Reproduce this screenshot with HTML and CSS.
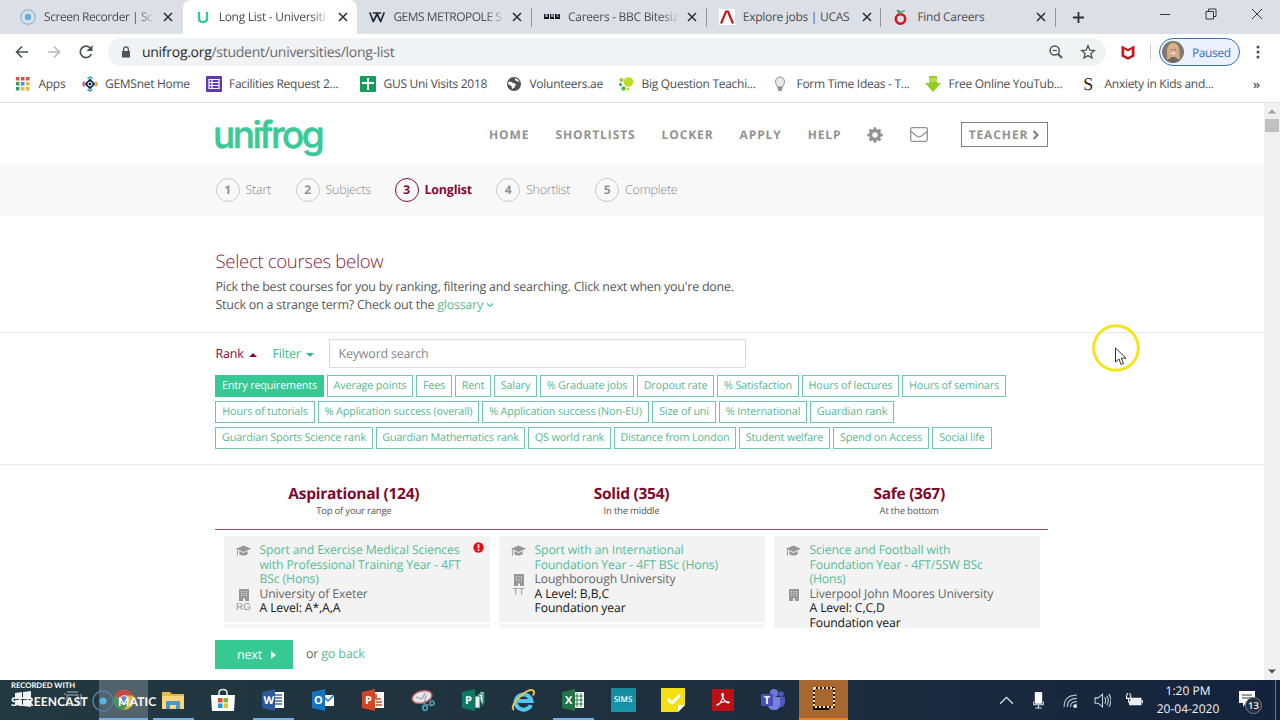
FILE: index.html
```html
<!DOCTYPE html>
<html lang="en">
<head>
<meta charset="utf-8">
<title>Long List - Universities</title>
<link rel="stylesheet" href="styles.css">
</head>
<body>
<div class="screen">
  <header class="browser">
    <div class="tabstrip">
      <div class="tab"><svg class="fav" viewBox="0 0 16 16"><circle cx="8" cy="8" r="7.2" fill="none" stroke="#78b6d8" stroke-width="1.1"/><circle cx="8" cy="8" r="3.2" fill="#5fb0dc"/></svg><span class="tab-title t1">Screen Recorder | Sc</span><svg class="close" viewBox="0 0 10 10"><path d="M1 1l8 8M9 1L1 9"/></svg></div>
      <div class="tab active"><svg class="fav" viewBox="0 0 16 16"><path d="M4 3v6.500q0 3.500 4 3.500t4-3.500V3" fill="none" stroke="#36c694" stroke-width="2.300"/></svg><span class="tab-title t2">Long List - Universiti</span><svg class="close" viewBox="0 0 10 10"><path d="M1 1l8 8M9 1L1 9"/></svg></div>
      <div class="tab sep"><svg class="fav" viewBox="0 0 16 16"><path d="M1 4L4.300 12.500 8 5 11.700 12.500 15 4M4.500 4H8L9.500 7.500M8 4h3.500" fill="none" stroke="#222831" stroke-width="1.700" stroke-linejoin="round" stroke-linecap="round"/></svg><span class="tab-title t3">GEMS METROPOLE S</span><svg class="close" viewBox="0 0 10 10"><path d="M1 1l8 8M9 1L1 9"/></svg></div>
      <div class="tab sep"><span class="fav bbc"><b>B</b><b>B</b><b>C</b></span><span class="tab-title t4">Careers - BBC Bitesiz</span><svg class="close" viewBox="0 0 10 10"><path d="M1 1l8 8M9 1L1 9"/></svg></div>
      <div class="tab sep"><svg class="fav" viewBox="0 0 16 16"><path d="M0 0h16v16H0z" fill="#fff"/><path d="M2 14.500L7 2.500h2l5 12" fill="none" stroke="#c5161c" stroke-width="2.200"/></svg><span class="tab-title t5">Explore jobs | UCAS</span><svg class="close" viewBox="0 0 10 10"><path d="M1 1l8 8M9 1L1 9"/></svg></div>
      <div class="tab sep"><svg class="fav" viewBox="0 0 16 16"><ellipse cx="7.500" cy="10" rx="4.700" ry="4.700" fill="none" stroke="#db111c" stroke-width="2.500"/><path d="M4 1q4 0 4 3.500Q4 4.500 4 1zM8 4.500q0-3 4-3" fill="#5a9d6c" stroke="#5a9d6c"/></svg><span class="tab-title t6">Find Careers</span><svg class="close" viewBox="0 0 10 10"><path d="M1 1l8 8M9 1L1 9"/></svg></div>
      <svg class="newtab" viewBox="0 0 14 14"><path d="M7 1v12M1 7h12" stroke="#2f3237" stroke-width="2"/></svg>
      <div class="window-buttons">
        <svg viewBox="0 0 12 12"><path d="M1 6.500h10"/></svg>
        <svg viewBox="0 0 12 12"><path d="M1 3.500h7.500V11H1zM3.500 3.500V1H11v7.500H8.500"/></svg>
        <svg viewBox="0 0 12 12"><path d="M1 1l10 10M11 1L1 11"/></svg>
      </div>
    </div>
    <div class="toolbar">
      <svg class="tool" viewBox="0 0 16 16"><path d="M14 8H2.500M8 2.500L2.500 8 8 13.500" fill="none" stroke="#4d5156" stroke-width="1.600"/></svg>
      <svg class="tool" viewBox="0 0 16 16"><path d="M2 8h11.500M8 2.500L13.500 8 8 13.500" fill="none" stroke="#b5b7ba" stroke-width="1.500"/></svg>
      <svg class="tool" viewBox="0 0 16 16"><path d="M13.300 10A5.700 5.700 0 1 1 12.500 4.400" fill="none" stroke="#4d5156" stroke-width="1.700"/><path d="M14.500 1v6h-6z" fill="#4d5156"/></svg>
      <div class="omnibox">
        <svg class="lock" viewBox="0 0 10 12"><path d="M1 5h8v6.500H1z" fill="#505256"/><path d="M2.700 5V3.200a2.300 2.300 0 0 1 4.600 0V5" fill="none" stroke="#505256" stroke-width="1.300"/></svg>
        <span class="url"><b>unifrog.org</b>/student/universities/long-list</span>
        <svg class="omni-icon" viewBox="0 0 16 16"><circle cx="6.700" cy="6.500" r="4.600" fill="none" stroke="#505256" stroke-width="1.500"/><path d="M10 10l4 4" stroke="#505256" stroke-width="1.900"/><path d="M4.500 6.500h4.400" stroke="#505256" stroke-width="1.200"/></svg>
        <svg class="omni-icon star" viewBox="0 0 16 16"><path d="M8 1.800l1.800 4.300 4.600.4-3.500 3 1.100 4.500-4-2.400L4 14l1.100-4.500-3.500-3 4.600-.4z" fill="none" stroke="#505256" stroke-width="1.300"/></svg>
      </div>
      <svg class="shield" viewBox="0 0 14 15"><path d="M.5.500L7 4 13.500.500v11L7 14.700.500 11.500z" fill="#c01820"/><path d="M3.200 4.300L7 6.500l3.800-2.200V10L7 12 3.200 10z" fill="#fff"/></svg>
      <span class="divider"></span>
      <div class="profile"><svg viewBox="0 0 22 22"><circle cx="11" cy="11" r="11" fill="#817970"/><path d="M5.500 19Q3 2 11 2t6.500 17z" fill="#d0ac80"/><ellipse cx="11.300" cy="9.800" rx="3.700" ry="5.200" fill="#dfa98d"/><path d="M7.500 9q.500-4 4-5.500Q14.500 5 15.300 9V5l-4-2.500-4 2.500z" fill="#dfc294"/><path d="M9.500 12q1.800 1.800 3.600 0z" stroke="#fff" stroke-width=".6" fill="#fff"/><path d="M9 8.700h1.500M12.300 8.700h1.500" stroke="#58392f" stroke-width=".8"/><path d="M5 19.500l5-3.500h3l5 3.500-6.500 2.500z" fill="#77665f"/></svg><span>Paused</span></div>
      <svg class="dots" viewBox="0 0 4 16"><circle cx="2" cy="3" r="1.500"/><circle cx="2" cy="8" r="1.500"/><circle cx="2" cy="13" r="1.500"/></svg>
    </div>
    <nav class="bookmarks">
      <a><svg viewBox="0 0 16 16"><path d="M1 1h3.500v3.500H1zM6 1h3.500v3.500H6zM11 1h3.500v3.500H11z" fill="#db5145"/><path d="M1 6h3.500v3.500H1z" fill="#38a05d"/><path d="M6 6h3.500v3.500H6z" fill="#4a8bda"/><path d="M11 6h3.500v3.500H11zM6 11h3.500v3.500H6zM11 11h3.500v3.500H11z" fill="#e5b745"/><path d="M1 11h3.500v3.500H1z" fill="#38a05d"/></svg><span>Apps</span></a>
      <a><svg viewBox="0 0 16 16"><path d="M8 2.500L13.500 8 8 13.500 2.500 8z" fill="#16304c"/><circle cx="8" cy="8" r="2" fill="none" stroke="#fff"/><path d="M5.500 2.500L8 1l2.500 1.500" fill="none" stroke="#2daad0" stroke-width="1.500"/><path d="M2.500 5.500L1 8l1.500 2.500" fill="none" stroke="#e04280" stroke-width="1.500"/><path d="M13.500 5.500L15 8l-1.500 2.500" fill="none" stroke="#df9f38" stroke-width="1.500"/><path d="M5.500 13.500L8 15l2.500-1.500" fill="none" stroke="#3797bc" stroke-width="1.500"/></svg><span>GEMSnet Home</span></a>
      <a><svg viewBox="0 0 16 16"><rect width="16" height="16" rx="1" fill="#6536b2"/><path d="M3 3.500h10v9H3zM6 3.500v9M3 6.500h10M3 9.500h10" fill="none" stroke="#fff" stroke-width="1.200"/></svg><span>Facilities Request 2...</span></a>
      <a><svg viewBox="0 0 16 16"><rect width="16" height="16" rx="1" fill="#159d59"/><path d="M8 2v12M2 7h12" stroke="#fff" stroke-width="2"/></svg><span>GUS Uni Visits 2018</span></a>
      <a><svg viewBox="0 0 16 16"><circle cx="8" cy="8" r="7" fill="#505256"/><path d="M2 6q3-1 5 1l3 1-1.500 3.500L6 13l-.5-3-3-1.500zM8.500 2l1 2.500 4 1.500-1.500-2.500z" fill="#fff"/></svg><span>Volunteers.ae</span></a>
      <a><svg viewBox="0 0 16 16"><circle cx="10.500" cy="6" r="4.800" fill="#bfd928"/><circle cx="3.500" cy="4" r="2" fill="#9ac94c"/><circle cx="2.500" cy="8.500" r="1.600" fill="#35a957"/><circle cx="5.500" cy="12.500" r="2.200" fill="#57b84f"/><circle cx="10" cy="13" r="1.600" fill="#bfd928"/></svg><span>Big Question Teachi...</span></a>
      <a><svg viewBox="0 0 16 16"><path d="M4.500 11Q2.500 8 2.500 5.500a4.500 4.500 0 0 1 9 0Q11.500 8 9.500 11z" fill="#e8e8e3" stroke="#929690"/><path d="M4.500 12h5M5 14h4" stroke="#777" stroke-width="1.300"/></svg><span>Form Time Ideas - T...</span></a>
      <a><svg viewBox="0 0 16 16"><path d="M4 0h8v7h4l-8 9-8-9h4z" fill="#91ce20"/><path d="M4 3h8M4 5h8" stroke="#d5ef8c"/></svg><span>Free Online YouTub...</span></a>
      <a><i>S</i><span>Anxiety in Kids and...</span></a>
      <a class="more">»</a>
    </nav>
  </header>

  <div class="viewport">
    <main class="page">
      <header class="site-header wrap">
        <div class="logo">unifrog</div>
        <nav class="menu">
          <a>HOME</a><a>SHORTLISTS</a><a>LOCKER</a><a>APPLY</a><a>HELP</a>
          <svg class="gear" viewBox="0 0 16 16"><path fill-rule="evenodd" d="M6.800.300h2.400l.4 2 1.300.5 1.700-1.100 1.700 1.700-1.100 1.700.5 1.300 2 .4v2.400l-2 .4-.5 1.300 1.100 1.700-1.700 1.700-1.700-1.100-1.300.5-.4 2H6.800l-.4-2-1.300-.5-1.700 1.100-1.700-1.700 1.100-1.700-.5-1.300-2-.4V6.800l2-.4.500-1.300-1.100-1.700 1.700-1.700 1.700 1.100 1.300-.5zM8 5.300a2.700 2.700 0 1 0 0 5.400 2.700 2.700 0 0 0 0-5.400z" fill="#929292"/></svg>
          <svg class="mail" viewBox="0 0 18 15"><rect x=".7" y=".7" width="16.600" height="13.600" rx="1.500"/><path d="M1 4.500l6 4.800q2 1.400 4 0l6-4.800"/></svg>
          <a class="teacher">TEACHER<svg viewBox="0 0 8 10"><path d="M1.500 1l4 4-4 4" fill="none" stroke="#868686" stroke-width="2.300"/></svg></a>
        </nav>
      </header>
      <section class="steps-band">
        <div class="steps wrap">
          <div class="step"><b>1</b><span class="s1">Start</span></div>
          <div class="step"><b>2</b><span>Subjects</span></div>
          <div class="step current"><b>3</b><span>Longlist</span></div>
          <div class="step"><b>4</b><span>Shortlist</span></div>
          <div class="step"><b>5</b><span>Complete</span></div>
        </div>
      </section>
      <section class="intro wrap">
        <h1>Select courses below</h1>
        <p>Pick the best courses for you by ranking, filtering and searching. Click next when you're done.</p>
        <p>Stuck on a strange term? Check out the <a>glossary <svg viewBox="0 0 8 6"><path d="M1 1.500l3 3 3-3" fill="none" stroke="#55bd95" stroke-width="1.200"/></svg></a></p>
      </section>
      <section class="filters">
        <div class="wrap">
          <div class="search-row">
            <a class="rank">Rank <svg viewBox="0 0 8 4"><path d="M0 4l4-4 4 4z" fill="#850b36"/></svg></a>
            <a class="filter">Filter <svg viewBox="0 0 8 4"><path d="M0 0l4 4 4-4z" fill="#32bd8c"/></svg></a>
            <div class="search">Keyword search</div>
          </div>
          <div class="tags row-one"><a class="on">Entry requirements</a><a>Average points</a><a>Fees</a><a>Rent</a><a>Salary</a><a>% Graduate jobs</a><a>Dropout rate</a><a>% Satisfaction</a><a>Hours of lectures</a><a>Hours of seminars</a></div>
          <div class="tags row-two"><a>Hours of tutorials</a><a>% Application success (overall)</a><a>% Application success (Non-EU)</a><a>Size of uni</a><a>% International</a><a>Guardian rank</a></div>
          <div class="tags row-three"><a>Guardian Sports Science rank</a><a>Guardian Mathematics rank</a><a>QS world rank</a><a>Distance from London</a><a>Student welfare</a><a>Spend on Access</a><a>Social life</a></div>
        </div>
      </section>
      <section class="results wrap">
        <div class="bands">
          <div><h2>Aspirational (124)</h2><p>Top of your range</p></div>
          <div><h2>Solid (354)</h2><p>In the middle</p></div>
          <div><h2>Safe (367)</h2><p>At the bottom</p></div>
        </div>
        <div class="cards">
          <div class="col">
            <article class="card">
              <svg class="cap" viewBox="0 0 16 12"><path d="M8 0l8 3.500L8 7 0 3.500z"/><path d="M3.500 6L8 8l4.500-2v3.500q-4.500 2.500-9 0zM1 4v7h1V4z"/></svg>
              <a>Sport and Exercise Medical Sciences<br>with Professional Training Year - 4FT<br>BSc (Hons)</a>
              <div class="kind"><svg class="bld" viewBox="0 0 10 12"><path d="M0 0h10v12H0z"/><path d="M2.500 2v6M5 2v6M7.500 2v6" stroke="#e5e5e5" stroke-dasharray="1 1"/><path d="M4 12V9.500h2V12" fill="#f3f3f4"/></svg>RG</div>
              <div class="info">University of Exeter<br><em>A Level: A*,A,A</em></div>
              <svg class="alert" viewBox="0 0 12 12"><circle cx="6" cy="6" r="5.600" fill="#ec0b14"/><path d="M6 2.500v4.300M6 8v1.700" stroke="#fff" stroke-width="1.800"/></svg>
            </article>
            <div class="next-card"></div>
          </div>
          <div class="col">
            <article class="card">
              <svg class="cap" viewBox="0 0 16 12"><path d="M8 0l8 3.500L8 7 0 3.500z"/><path d="M3.500 6L8 8l4.500-2v3.500q-4.500 2.500-9 0zM1 4v7h1V4z"/></svg>
              <a>Sport with an International<br>Foundation Year - 4FT BSc (Hons)</a>
              <div class="kind"><svg class="bld" viewBox="0 0 10 12"><path d="M0 0h10v12H0z"/><path d="M2.500 2v6M5 2v6M7.500 2v6" stroke="#e5e5e5" stroke-dasharray="1 1"/><path d="M4 12V9.500h2V12" fill="#f3f3f4"/></svg>TT</div>
              <div class="info">Loughborough University<br><em>A Level: B,B,C<br>Foundation year</em></div>
            </article>
            <div class="next-card"></div>
          </div>
          <div class="col">
            <article class="card tall">
              <svg class="cap" viewBox="0 0 16 12"><path d="M8 0l8 3.500L8 7 0 3.500z"/><path d="M3.500 6L8 8l4.500-2v3.500q-4.500 2.500-9 0zM1 4v7h1V4z"/></svg>
              <a>Science and Football with<br>Foundation Year - 4FT/5SW BSc<br>(Hons)</a>
              <div class="kind"><svg class="bld" viewBox="0 0 10 12"><path d="M0 0h10v12H0z"/><path d="M2.500 2v6M5 2v6M7.500 2v6" stroke="#e5e5e5" stroke-dasharray="1 1"/><path d="M4 12V9.500h2V12" fill="#f3f3f4"/></svg></div>
              <div class="info">Liverpool John Moores University<br><em>A Level: C,C,D<br>Foundation year</em></div>
            </article>
          </div>
        </div>
      </section>
      <footer class="actions wrap"><a class="next">next<svg viewBox="0 0 5 8"><path d="M0 0l5 4-5 4z" fill="#fff"/></svg></a><span>or <a>go back</a></span></footer>
    </main>
    <aside class="scrollbar"><svg viewBox="0 0 8 5"><path d="M0 4.500L4 .500l4 4z" fill="#9a9a9a"/></svg><span class="thumb"></span><svg class="down" viewBox="0 0 8 5"><path d="M0 .500L4 4.500l4-4z" fill="#505050"/></svg></aside>
  </div>

  <footer class="taskbar">
    <div class="apps">
      <div><svg viewBox="0 0 24 24"><path d="M4 5l7-1v7H4zM12 4l8-1v8h-8zM4 12h7v6l-7-1zM12 12h8v7l-8-1z" fill="#edf1f2"/></svg></div>
      <div><svg viewBox="0 0 24 24"><path d="M6 7h11v10H6zM4 5v2M20 6v12M6 4h11" fill="none" stroke="#a9b5ba"/></svg></div>
      <div class="open chrome"><svg viewBox="0 0 24 24"><circle cx="12" cy="12" r="10" fill="#e4b33b"/><path d="M3.300 7A10 10 0 0 1 21 7.500H12L8 14z" fill="#c94840"/><path d="M3.300 7A10 10 0 0 0 12 22l4-7-8-1z" fill="#459758"/><circle cx="12" cy="12" r="4.700" fill="#eee"/><circle cx="12" cy="12" r="3.700" fill="#4d8ac8"/></svg></div>
      <div class="open"><svg viewBox="0 0 24 24"><path d="M1 4h8l2 2h12v15H1z" fill="#e8b848"/><path d="M1 8h22v13H1z" fill="#fad778"/><path d="M5 21v-7q0-1 1-1h12q1 0 1 1v7h-4v-4H9v4z" fill="#4a98d1"/></svg></div>
      <div><svg viewBox="0 0 24 24"><path d="M8 9V5q0-3.500 4-3.500T16 5v4" fill="none" stroke="#dce8e9" stroke-width="1.600"/><path d="M0 7h24l-1 16H1z" fill="#fff"/><path d="M7 10h4.500v4.500H7z" fill="#dc5133"/><path d="M12.500 10H17v4.500h-4.500z" fill="#83b82c"/><path d="M7 15.500h4.500V20H7z" fill="#159fdb"/><path d="M12.500 15.500H17V20h-4.500z" fill="#f3ba25"/></svg></div>
      <div class="open"><svg viewBox="0 0 24 24"><path d="M11 4h12v16H11z" fill="#fff"/><path d="M13 7h8M13 10h8M13 13h8M13 16h8" stroke="#3d66ad" stroke-width="1.500"/><path d="M1 4l13-3v22L1 20z" fill="#2b579b"/><text x="2.500" y="16">W</text></svg></div>
      <div><svg viewBox="0 0 24 24"><path d="M12 7h11v11H12z" fill="#fff"/><path d="M12 8l5 5 6-6" fill="none" stroke="#1876be" stroke-width="1.500"/><path d="M1 4l13-3v22L1 20z" fill="#1775bd"/><text x="3" y="16">O</text></svg></div>
      <div><svg viewBox="0 0 24 24"><path d="M12 4h11v16H12z" fill="#fff"/><path d="M15 6v5h5M15 14h6M15 17h6" stroke="#cf4727" stroke-width="1.700" fill="none"/><path d="M1 4l13-3v22L1 20z" fill="#cf4727"/><text x="4" y="16">P</text></svg></div>
      <div><svg viewBox="0 0 24 24"><ellipse cx="11" cy="9" rx="10" ry="6" transform="rotate(-15 11 9)" fill="#e3e7e7" stroke="#bc6264" stroke-width="1.500"/><path d="M5 9l6 2 3-6M15 7l-3 14M14 16l7 2" stroke="#879ba4" fill="none"/><circle cx="14" cy="20" r="2.300" fill="none" stroke="#3da0bd" stroke-width="1.700"/><circle cx="21" cy="15" r="2" fill="none" stroke="#3da0bd" stroke-width="1.700"/></svg></div>
      <div><svg viewBox="0 0 24 24"><path d="M14 8h5v12h-5zM17 6h5v12M19 4h4v12" fill="#ebf6f0" stroke="#19775d"/><path d="M1 4l13-3v22L1 20z" fill="#107765"/><text x="4" y="16">P</text></svg></div>
      <div><svg viewBox="0 0 24 24"><path d="M20 17a8 7.500 0 1 1 .5-4H7" fill="none" stroke="#53c5ee" stroke-width="4"/><path d="M3 22Q-1 19 8 9.500 18 0 22 2.500q2 1 0 5" fill="none" stroke="#eac24b" stroke-width="2"/></svg></div>
      <div class="open"><svg viewBox="0 0 24 24"><path d="M12 4h11v16H12z" fill="#fff"/><path d="M16 5v14M20 5v14M13 8h9M13 12h9M13 16h9" stroke="#26774a"/><path d="M1 4l13-3v22L1 20z" fill="#227446"/><text x="4" y="16">X</text></svg></div>
      <div><span class="sims">SIMS</span></div>
      <div><svg viewBox="0 0 24 24"><path d="M0 0h24v17l-7 7H0z" fill="#f4df13"/><path d="M17 24v-7h7z" fill="#fff"/><path d="M7 11l4 4 8-8" fill="none" stroke="#fff" stroke-width="3"/></svg></div>
      <div><svg viewBox="0 0 24 24"><path d="M1 1h22v22H1z" fill="#bd1014"/><path d="M6 17Q9 17 11.500 10q1.500-5 0-4.500-1.500 1 .8 4.800 2.700 4.700 5 4.700 2.500-1.500-2-1.500-5 0-9.300 3.500z" fill="none" stroke="#fff" stroke-width="1.200"/></svg></div>
      <div><svg viewBox="0 0 24 24"><circle cx="13" cy="5" r="4" fill="#7076d2"/><circle cx="20" cy="6" r="2.800" fill="#5158ba"/><path d="M16 9h8v6q-1 5-6 4z" fill="#5158ba"/><path d="M7 9h12v7q0 6-6 6t-6-6z" fill="#7981df"/><path d="M0 6h12v12H0z" fill="#464eb8"/><text x="2.800" y="16">T</text></svg></div>
      <div class="snip"><svg viewBox="0 0 24 24"><path d="M1 20h16v3H1z" fill="#100d09"/><path d="M2 1h20v19H2z" fill="none" stroke="#201b15" stroke-width="2"/><path d="M2 1h20v19H2z" fill="none" stroke="#f4dfb5" stroke-width="2" stroke-dasharray="2 2"/></svg></div>
    </div>
    <div class="tray">
      <svg viewBox="0 0 16 16"><path d="M2 11l6-6 6 6" fill="none" stroke="#dbe2eb" stroke-width="1.200"/></svg>
      <svg viewBox="0 0 16 16"><rect x="4.500" y="0" width="7" height="11" rx="1" fill="#fff"/><path d="M3.500 9v3h9V9M8 12v3M5 15h6" stroke="#dce3e9" fill="none"/></svg>
      <svg viewBox="0 0 16 16"><path d="M2 14Q2 3 14 3M5 14q0-8 9-8M8 14q0-5 6-5M11 14q0-2.500 3-2.500" fill="none" stroke="#aeb9c7" stroke-width="1.100"/><circle cx="12.500" cy="13.500" r="1.500" fill="#fff"/></svg>
      <svg viewBox="0 0 16 16"><path d="M1 5.500h3l4-3.500v12l-4-3.500H1zM10 5q2 3 0 6M12 3.500q3 4.500 0 9M14 2q4 6 0 12" fill="none" stroke="#cbd4df"/></svg>
      <svg viewBox="0 0 16 16"><path d="M4.500 6H14v6H3.500V9" fill="#e9eef4" stroke="#fff"/><path d="M15.300 7.500v3M.500 3v3h4V3M1.200 1v2M3.800 1v2M2.500 6v4" stroke="#fff" fill="none"/></svg>
      <div class="clock"><span>1:20 PM</span><span>20-04-2020</span></div>
      <div class="notice"><svg viewBox="0 0 18 18"><path d="M1 1h16v12H8l-3 4v-4H1z" fill="#fff"/><path d="M4 5h10M4 8h10" stroke="#25384b"/></svg><span>13</span></div>
      <span class="desktop-edge"></span>
    </div>
  </footer>

  <div class="watermark"><span class="recorded">RECORDED WITH</span><span class="brand"><span class="cast">SCREENCAST</span><svg viewBox="0 0 24 24"><circle cx="12" cy="12" r="10" fill="none" stroke="#5381a8" stroke-width="1.400"/><circle cx="12" cy="12" r="3.600" fill="#5bb2e9"/></svg><span class="matic">MATIC</span></span></div>
  <svg class="pointer" viewBox="0 0 50 50"><circle cx="25" cy="25" r="22.300" fill="none" stroke="#f2e51c" stroke-width="3"/><path d="M24.500 25v14l3.500-3 2 5.500 2.500-1-2.200-5.300h4.700z" fill="#fff" stroke="#333" stroke-width="1"/></svg>
</div>
</body>
</html>
```
FILE: styles.css
```css
* { box-sizing: border-box; }
body { margin: 0; font-family: "Open Sans", "Noto Sans", sans-serif; overflow: hidden; text-rendering: geometricPrecision; }
h1, h2, p { margin: 0; }
svg { display: block; flex: none; }
.screen { position: relative; width: 1280px; height: 720px; display: grid; grid-template-rows: 103px 577px 40px; background: #fff; overflow: hidden; }

.browser { border-bottom: 1px solid #e1e1e2; color: #4b4e53; }
.tabstrip { height: 34px; background: #dcdfe6; display: flex; align-items: center; padding-left: 8px; }
.tab { width: 174.700px; height: 34px; display: flex; align-items: center; padding: 0 0 1px 12px; font-size: 12px; letter-spacing: -0.280px; }
.tab.active { background: #fff; border-radius: 8px 8px 0 0; }
.tab.sep { background: linear-gradient(#92969d, #92969d) 100% 50% / 1px 19px no-repeat; }
.fav { width: 16px; height: 16px; flex: none; }
.tab-title { width: 110px; margin-left: 8px; white-space: nowrap; mask-image: linear-gradient(90deg, #000 84%, transparent 102%); }
.close { width: 10px; height: 10px; margin-left: 9px; stroke: #2e3136; stroke-width: 1.600; }
.t1 { letter-spacing: -0.450px; }
.t3 { letter-spacing: -0.500px; }
.bbc { display: flex; align-items: center; gap: 1px; }
.bbc b { width: 4.700px; height: 5px; background: #15181b; color: #ddd; font-size: 4px; line-height: 5px; text-align: center; letter-spacing: 0; }
.t5, .t6 { mask-image: none; }
.newtab { width: 13px; height: 13px; margin-left: 16px; }
.window-buttons { display: flex; gap: 34px; margin-left: auto; padding-right: 17px; align-self: flex-start; margin-top: 8px; }
.window-buttons svg { width: 12px; height: 12px; fill: none; stroke: #34383e; stroke-width: 1; }
.toolbar { height: 34px; display: flex; align-items: center; padding: 2px 0 0 14px; }
.tool { width: 16px; height: 16px; margin-right: 16px; }
.omnibox { width: 998px; height: 28px; border-radius: 14px; background: #f1f2f4; margin-left: -2px; display: flex; align-items: center; padding: 0 10px 0 13px; }
.lock { width: 10px; height: 12px; }
.url { flex: 1; margin-left: 11px; font-size: 14px; color: #686b70; letter-spacing: -0.280px; }
.url b { font-weight: 400; color: #27292d; }
.omni-icon { width: 16px; height: 16px; margin-left: 16px; }
.shield { width: 14px; height: 15px; margin-left: 15px; }
.divider { width: 1px; height: 16px; background: #cccdd0; margin: 0 8px 0 15px; }
.profile { width: 81px; height: 28px; border: 1px solid #3a70bd; border-radius: 14px; background: #ecf2fd; color: #3b70bc; display: flex; align-items: center; gap: 8px; padding-left: 2px; font-size: 12px; letter-spacing: -0.400px; }
.profile svg { width: 22px; height: 22px; }
.dots { width: 4px; height: 16px; fill: #494c50; margin-left: 16px; }
.bookmarks { height: 31px; padding-left: 15px; display: grid; grid-template-columns: 66.500px 124px 154.500px 146px 112px 155px 152px 156px 174px auto; align-items: center; font-size: 12px; letter-spacing: -0.280px; white-space: nowrap; }
.bookmarks a { display: flex; align-items: center; gap: 7.500px; }
.bookmarks svg, .bookmarks i { width: 16px; height: 16px; flex: none; }
.bookmarks i { font: 18px/16px "Liberation Serif", serif; text-align: center; color: #222; margin: 0 1px 0 -1px; }
.bookmarks .more { font-size: 13px; font-weight: 600; margin-left: -2px; }

.viewport { display: grid; grid-template-columns: 1264px 16px; min-height: 0; }
.page { overflow: hidden; }
.wrap { width: 833px; margin-left: 215px; }
.site-header { height: 61px; display: flex; align-items: center; justify-content: space-between; }
.logo { font: 500 37px/56px Inter, sans-serif; -webkit-text-stroke: .5px #3bc996; letter-spacing: -2.500px; color: #3bc996; width: 120px; margin: 2px 0 0 -2px; }
.menu { display: flex; align-items: center; width: 559px; font-size: 12px; font-weight: 700; letter-spacing: 0.900px; color: #929292; padding-top: 2px; }
.menu a { margin-right: 26px; }
.gear { width: 16px; height: 16px; }
.mail { width: 18px; height: 15px; margin-left: 27px; fill: none; stroke: #929292; stroke-width: 1.300; }
.menu .teacher { display: flex; align-items: center; justify-content: center; gap: 4px; width: 87px; height: 25px; border: 1px solid #808080; margin: 0 0 0 auto; letter-spacing: 0.900px; }
.teacher svg { width: 8px; height: 10px; }
.steps-band { height: 52px; background: #f8f8f8; }
.steps { height: 51px; padding-left: .5px; display: grid; grid-template-columns: 80px 99px 101.500px 99px 100px; align-items: center; font-size: 12.500px; letter-spacing: -0.230px; font-weight: 300; color: #888; }
.step { display: flex; align-items: center; gap: 6px; }
.step b { width: 24px; height: 24px; border: 1px solid #c9c9c9; border-radius: 50%; text-align: center; line-height: 22px; color: #929292; font-weight: 700; font-size: 12px; }
.step.current, .step.current b { color: #830b35; border-color: #830b35; font-weight: 700; }
.intro { height: 116px; padding: 32px 0 0 .5px; font-size: 12.500px; letter-spacing: -0.240px; line-height: 18px; color: #575757; }
.intro h1 { font-size: 18.500px; letter-spacing: -0.300px; line-height: 27px; font-weight: 300; color: #881b43; margin-bottom: 3px; }
.intro a, .actions a { color: #55bd95; }
.intro svg { display: inline-block; width: 8px; height: 6px; margin-bottom: 1px; }
.filters { height: 133px; border: solid #e9e9e9; border-width: 1px 0; }
.search-row { display: flex; align-items: center; height: 39px; padding: 2px 0 0 .5px; font-size: 12.500px; letter-spacing: -0.200px; }
.search-row a { display: flex; align-items: center; gap: 5px; }
.search-row a svg { width: 8px; height: 4px; margin-top: 2px; }
.rank { width: 57px; color: #850b36; }
.filter { width: 56px; color: #38bb8d; }
.search { width: 417px; height: 29px; border: 1px solid #dcdcdc; padding-left: 9px; line-height: 27px; color: #888; }
.tags { display: grid; column-gap: 3px; height: 22px; margin-top: 3px; }
.tags a { height: 22px; border: 1px solid #6fc8aa; color: #55b994; font-size: 10.800px; letter-spacing: -0.150px; line-height: 20px; text-align: center; white-space: nowrap; }
.row-two, .row-three { margin-top: 4px; }
.row-two a, .row-three a { line-height: 19px; }
.tags a.on { background: #36c993; border-color: #36c993; color: #fff; }
.row-one { grid-template-columns: 109px 86px 36px 36px 43px 94px 77px 82px 97px 104px; }
.row-two { grid-template-columns: 100px 161px 167px 64px 88px 84px; }
.row-three { grid-template-columns: 158px 149px 83px 122px 91px 96px 60px; }
.results { height: 163px; }
.bands { height: 65px; border-bottom: 1px solid #965363; display: grid; grid-template-columns: repeat(3, 1fr); text-align: center; padding-top: 18px; }
.bands h2 { font-size: 15.500px; letter-spacing: -0.270px; line-height: 21px; font-weight: 700; color: #7d092e; }
.bands p { font-size: 9.500px; letter-spacing: -0.200px; line-height: 14px; color: #555; }
.cards { height: 98px; overflow: hidden; padding: 6px 8px 0 9px; display: grid; grid-template-columns: repeat(3, 266px); column-gap: 9px; align-content: start; }
.card { position: relative; height: 86px; background: #f3f3f4; display: grid; grid-template-columns: 20px 1fr; column-gap: 6px; align-content: start; padding: 7px 0 0 9.500px; font-size: 12.200px; letter-spacing: -0.120px; line-height: 14.600px; white-space: nowrap; color: #656565; }
.card.tall { height: 110px; }
.card a { color: #55bd95; }
.card em { font-style: normal; color: #151515; }
.cap { width: 15px; height: 12px; fill: #979797; margin: 2px 0 0 2px; }
.kind { font: 10px/14px "Liberation Sans", sans-serif; color: #999; text-align: center; padding-top: 2px; }
.bld { width: 10px; height: 12px; fill: #979797; margin: 0 auto; }
.alert { position: absolute; right: 6px; top: 6px; width: 11px; height: 11px; }
.next-card { height: 10px; margin-top: 2px; background: #f4f4f4; }
.actions { height: 52px; display: flex; align-items: flex-start; padding-top: 12px; font-size: 12.500px; letter-spacing: -0.200px; color: #666; }
.actions .next { width: 78px; height: 29px; background: #36c993; color: #fff; display: flex; align-items: center; justify-content: center; gap: 9px; margin-right: 13px; padding-left: 5px; }
.next svg { width: 5px; height: 8px; }
.actions span { line-height: 27px; }
.scrollbar { background: #f0f0f1; display: flex; flex-direction: column; align-items: center; padding: 6px 0; }
.scrollbar svg { width: 8px; height: 5px; }
.thumb { width: 14px; height: 13px; background: #c1c1c2; margin-top: 5px; }
.scrollbar .down { margin-top: auto; }

.taskbar { background: linear-gradient(90deg, #233941, #1e303e 50%, #14233d); display: flex; justify-content: space-between; }
.apps { display: grid; grid-template-columns: repeat(17, 50px); margin-left: -2px; }
.apps > div { display: flex; align-items: center; justify-content: center; }
.apps > div > svg { width: 24px; height: 24px; }
.apps text { font: 700 11px "Open Sans", sans-serif; fill: #fff; }
.apps .open { background: linear-gradient(#76afe6, #76afe6) 50% 100% / 41px 2px no-repeat; }
.apps .chrome { background: linear-gradient(#76afe6, #76afe6) 50% 100% / 49px 2px no-repeat, #52636b; margin-left: 1px; }
.apps .snip { background: #a8672f; border-bottom: 2px solid #f18418; margin-left: 1px; }
.sims { width: 25px; height: 24px; background: linear-gradient(#168a9b, #1596ad); color: #fff; font-size: 8px; font-weight: 600; line-height: 24px; text-align: center; }
.tray { display: flex; align-items: center; width: 282px; color: #f3f5f8; }
.tray > svg { width: 17px; height: 17px; margin-right: 15px; }
.clock { width: 72px; display: flex; flex-direction: column; text-align: center; font-size: 12px; line-height: 18px; margin-left: -6px; }
.notice { position: relative; width: 28px; height: 20px; margin-left: 14px; }
.notice svg { width: 18px; height: 18px; }
.notice span { position: absolute; left: 7px; top: 7px; width: 17px; height: 17px; border: 1px solid #737b84; border-radius: 50%; background: #282f38; font-size: 9.500px; line-height: 15px; font-weight: 600; text-align: center; }
.desktop-edge { width: 1px; height: 40px; background: #6d7888; margin-left: auto; margin-right: 4px; }

.watermark { position: absolute; left: 11px; top: 680px; height: 40px; display: flex; flex-direction: column; color: #fff; font-weight: 700; font-family: Lato, sans-serif; }
.recorded { font-size: 7.700px; line-height: 11px; letter-spacing: 0; }
.brand { display: flex; align-items: center; height: 20px; font-size: 12px; letter-spacing: .150px; }
.brand svg { width: 24px; height: 24px; margin: 0 3px; }
.cast { width: 77px; }
.pointer { position: absolute; left: 1091px; top: 323px; width: 50px; height: 50px; }
```
